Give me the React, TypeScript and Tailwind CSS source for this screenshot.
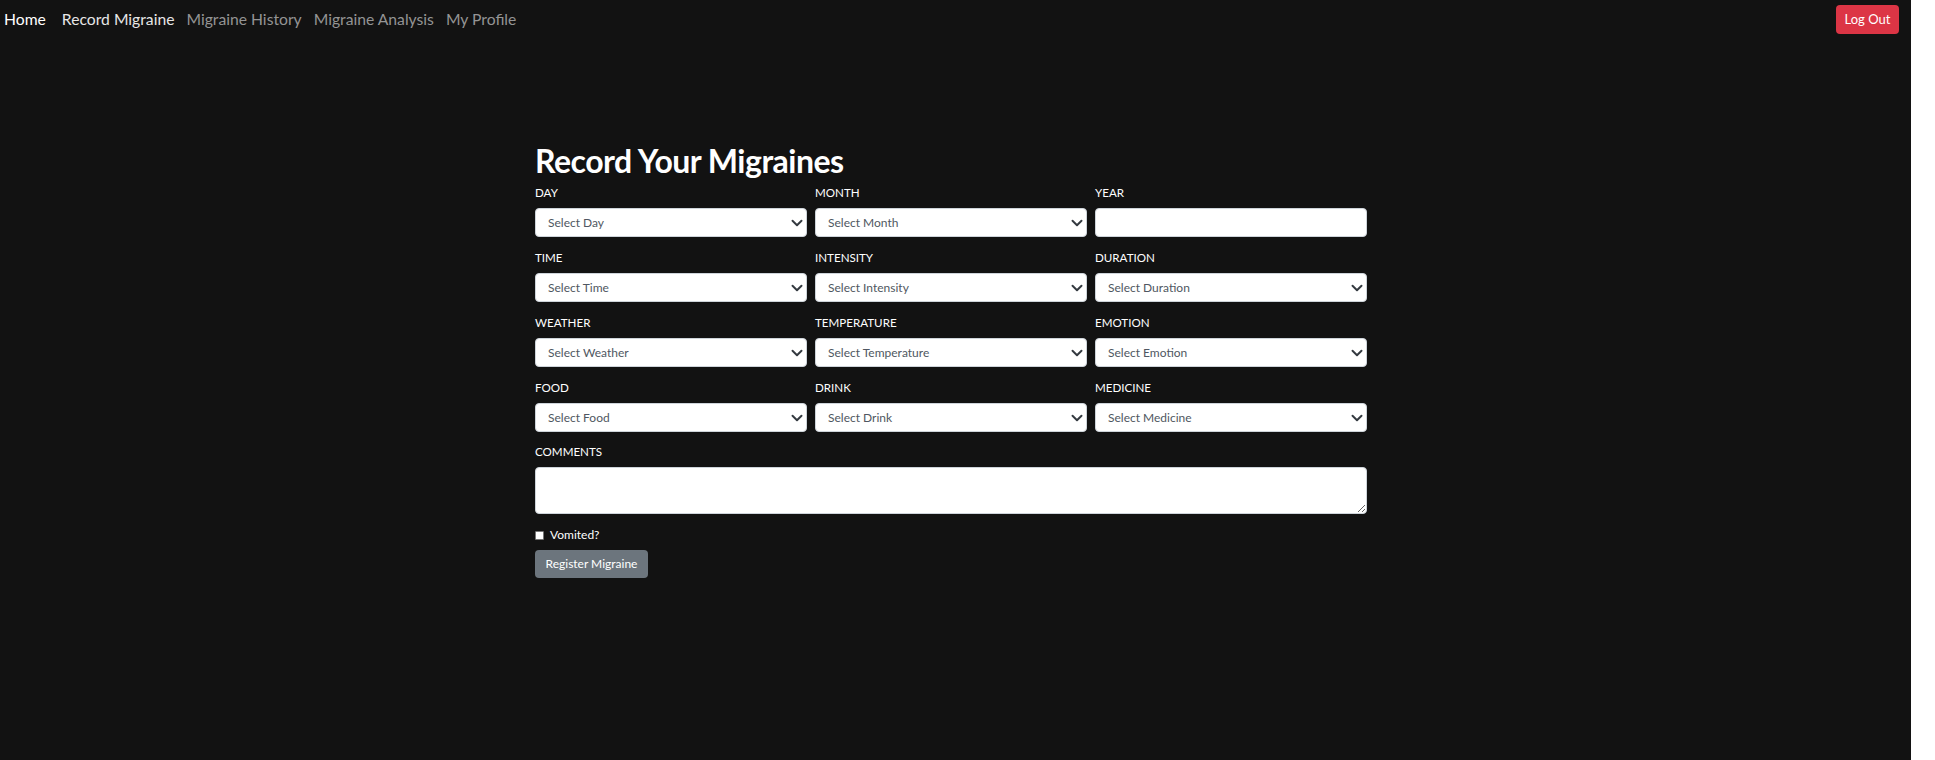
import React from "react";

const font = { fontFamily: "Lato, 'Noto Sans', 'Liberation Sans', sans-serif" };

function Chevron() {
  return (
    <svg
      className="pointer-events-none absolute right-[4px] top-1/2 h-[12px] w-[12px] -translate-y-1/2"
      viewBox="0 0 16 16"
      fill="none"
    >
      <path d="M2 5l6 6 6-6" stroke="#343a40" strokeWidth="2.6" strokeLinecap="round" strokeLinejoin="round" />
    </svg>
  );
}

function FieldLabel({ children }: { children: React.ReactNode }) {
  return <label className="mb-[6px] h-[18px] text-[11.6px] leading-[18px] text-white">{children}</label>;
}

function SelectField({ label, placeholder }: { label: string; placeholder: string }) {
  return (
    <div className="flex flex-col">
      <FieldLabel>{label}</FieldLabel>
      <div className="relative">
        <select
          defaultValue=""
          className="h-[29px] w-full appearance-none rounded-[4px] border border-[#ced4da] bg-white pl-[12px] pr-[24px] text-[12px] text-[#4f5761] outline-none"
          style={font}
        >
          <option value="" disabled>
            {placeholder}
          </option>
        </select>
        <Chevron />
      </div>
    </div>
  );
}

function InputField({ label }: { label: string }) {
  return (
    <div className="flex flex-col">
      <FieldLabel>{label}</FieldLabel>
      <input
        type="text"
        className="h-[29px] w-full rounded-[4px] border border-[#ced4da] bg-white px-[12px] text-[12px] text-[#495057] outline-none"
        style={font}
      />
    </div>
  );
}

export default function App() {
  return (
    <div className="flex min-h-[760px] w-full" style={font}>
      <div className="min-h-[760px] w-[1911px] shrink-0 bg-[#121212]">
        <nav className="flex h-[39px] items-center justify-between pl-[4px] pr-[12px]">
          <div className="flex items-center pb-[1px] text-[15.7px] leading-[24px]">
            <a className="mr-[16px] text-white">Home</a>
            <a className="mr-[12px] text-[#e6e6e6]">Record Migraine</a>
            <a className="mr-[12px] text-[#949494]">Migraine History</a>
            <a className="mr-[12px] text-[#949494]">Migraine Analysis</a>
            <a className="text-[#949494]">My Profile</a>
          </div>
          <button className="h-[29px] w-[63px] rounded-[4px] bg-[#dc3545] text-[13px] text-white">Log Out</button>
        </nav>

        <main className="ml-[535px] w-[832px] pt-[101px]">
          <h1 className="text-[32px] font-bold leading-[41px] tracking-[-0.5px] text-white">Record Your Migraines</h1>
          <div className="mt-[3px] grid grid-cols-3 gap-x-2 gap-y-[12px]">
            <SelectField label="DAY" placeholder="Select Day" />
            <SelectField label="MONTH" placeholder="Select Month" />
            <InputField label="YEAR" />
            <SelectField label="TIME" placeholder="Select Time" />
            <SelectField label="INTENSITY" placeholder="Select Intensity" />
            <SelectField label="DURATION" placeholder="Select Duration" />
            <SelectField label="WEATHER" placeholder="Select Weather" />
            <SelectField label="TEMPERATURE" placeholder="Select Temperature" />
            <SelectField label="EMOTION" placeholder="Select Emotion" />
            <SelectField label="FOOD" placeholder="Select Food" />
            <SelectField label="DRINK" placeholder="Select Drink" />
            <SelectField label="MEDICINE" placeholder="Select Medicine" />
          </div>
          <div className="mt-[11px] flex flex-col">
            <FieldLabel>COMMENTS</FieldLabel>
            <textarea className="h-[47px] w-full resize-y rounded-[4px] border border-[#ced4da] bg-white px-[12px] py-[6px] text-[12px] text-[#495057] outline-none" />
          </div>
          <div className="mt-[12px] flex h-[18px] items-center">
            <input
              type="checkbox"
              className="mr-[6px] h-[9px] w-[9px] appearance-none rounded-[1px] border border-[#767676] bg-white"
            />
            <span className="text-[12px] leading-[18px] text-white">Vomited?</span>
          </div>
          <button className="mt-[6px] h-[28px] w-[113px] rounded-[4px] bg-[#6c757d] text-[12px] text-white">
            Register Migraine
          </button>
        </main>
      </div>
      <div className="min-h-[760px] flex-1 bg-white" />
    </div>
  );
}
